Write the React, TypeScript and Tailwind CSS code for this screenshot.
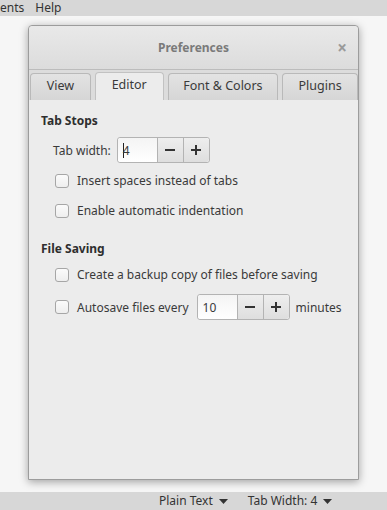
import React from "react";

function Check({ label }: { label: string }) {
  return (
    <div className="flex h-[17px] items-center gap-[8px]">
      <span className="h-[14px] w-[14px] shrink-0 rounded-[3px] border border-[#a6a6a6] bg-gradient-to-b from-[#fbfbfb] to-[#eeeeee]" />
      <span>{label}</span>
    </div>
  );
}

function Spin({ value, cursor }: { value: string; cursor?: boolean }) {
  return (
    <div className="flex h-[26px] rounded-[3px] border border-[#b3b3b3] bg-white">
      <div className="flex w-[39px] items-center rounded-l-[3px] bg-gradient-to-b from-[#f4f4f4] to-[#ffffff] pl-[5px]">
        {cursor && <span className="mr-[-1px] h-[15px] w-px bg-[#222]" />}
        <span>{value}</span>
      </div>
      <div className="flex w-[26px] items-center justify-center border-l border-[#b3b3b3] bg-gradient-to-b from-[#eeeeee] to-[#dedede]">
        <span className="h-[2px] w-[10px] bg-[#333]" />
      </div>
      <div className="relative flex w-[26px] items-center justify-center rounded-r-[3px] border-l border-[#b3b3b3] bg-gradient-to-b from-[#eeeeee] to-[#dedede]">
        <span className="h-[2px] w-[10px] bg-[#333]" />
        <span className="absolute h-[10px] w-[2px] bg-[#333]" />
      </div>
    </div>
  );
}

function Caret() {
  return (
    <svg width="9" height="5" viewBox="0 0 9 5" className="ml-[6px]">
      <path d="M0 0h9L4.5 5z" fill="#333" />
    </svg>
  );
}

export default function App() {
  return (
    <div
      className="flex h-[510px] w-[387px] flex-col overflow-hidden bg-[#f6f6f6] text-[12px] leading-[17px] text-[#3a3a3a]"
      style={{ fontFamily: '"Noto Sans", "Open Sans", sans-serif' }}
    >
      <div className="flex h-[16px] items-center gap-[11px] bg-[#d7d7d7] text-[12px] leading-none text-[#333]">
        <span>ents</span>
        <span>Help</span>
      </div>

      <div className="flex-1 pl-[28px] pt-[9px]">
        <div className="flex h-[455px] w-[331px] flex-col rounded-t-[4px] border border-[#9c9c9c] bg-[#ececec] shadow-[0_2px_8px_rgba(0,0,0,0.35)]">
          <div className="relative flex h-[44px] items-center justify-center rounded-t-[4px] border-b border-[#bcbcbc] bg-gradient-to-b from-[#e9e9e9] to-[#dcdcdc]">
            <span className="font-bold text-[#7a7a7a]">Preferences</span>
            <span className="absolute right-[11px] top-[13px] text-[17px] font-bold leading-none text-[#9a9a9a]">×</span>
          </div>

          <div className="flex h-[30px] items-end gap-[4px] bg-[#dcdcdc] pl-[1px] text-[12.5px]">
            <div className="flex h-[27px] w-[61px] items-center justify-center rounded-t-[4px] border border-b-0 border-[#b9b9b9] bg-gradient-to-b from-[#e3e3e3] to-[#d6d6d6] pb-[3px]">
              View
            </div>
            <div className="flex h-[28px] w-[69px] items-start justify-center rounded-t-[4px] border border-b-0 border-[#c2c2c2] bg-[#ececec] pt-[3px]">
              Editor
            </div>
            <div className="flex h-[27px] w-[111px] items-center justify-center rounded-t-[4px] border border-b-0 border-[#b9b9b9] bg-gradient-to-b from-[#e3e3e3] to-[#d6d6d6] pb-[3px]">
              Font &amp; Colors
            </div>
            <div className="flex h-[27px] w-[76px] items-center justify-center rounded-t-[4px] border border-b-0 border-[#b9b9b9] bg-gradient-to-b from-[#e3e3e3] to-[#d6d6d6] pb-[3px]">
              Plugins
            </div>
          </div>

          <div className="flex flex-1 flex-col pl-[12px] pt-[12px] text-[12px]">
            <div className="font-bold text-[#2e2e2e]">Tab Stops</div>
            <div className="mt-[8px] flex items-center gap-[6px] pl-[12px]">
              <span>Tab width:</span>
              <Spin value="4" cursor />
            </div>
            <div className="mt-[9px] flex flex-col gap-[13px] pl-[14px]">
              <Check label="Insert spaces instead of tabs" />
              <Check label="Enable automatic indentation" />
            </div>

            <div className="mt-[21px] font-bold text-[#2e2e2e]">File Saving</div>
            <div className="mt-[9px] flex flex-col gap-[11px] pl-[14px]">
              <Check label="Create a backup copy of files before saving" />
              <div className="flex items-center gap-[8px]">
                <Check label="Autosave files every" />
                <Spin value="10" />
                <span className="ml-[-2px]">minutes</span>
              </div>
            </div>
          </div>
        </div>
      </div>

      <div className="flex h-[18px] items-center bg-[#d7d7d7] pl-[159px] text-[12px] leading-none text-[#333]">
        <span className="flex items-center">
          Plain Text
          <Caret />
        </span>
        <span className="ml-[20px] flex items-center">
          Tab Width: 4
          <Caret />
        </span>
      </div>
    </div>
  );
}
